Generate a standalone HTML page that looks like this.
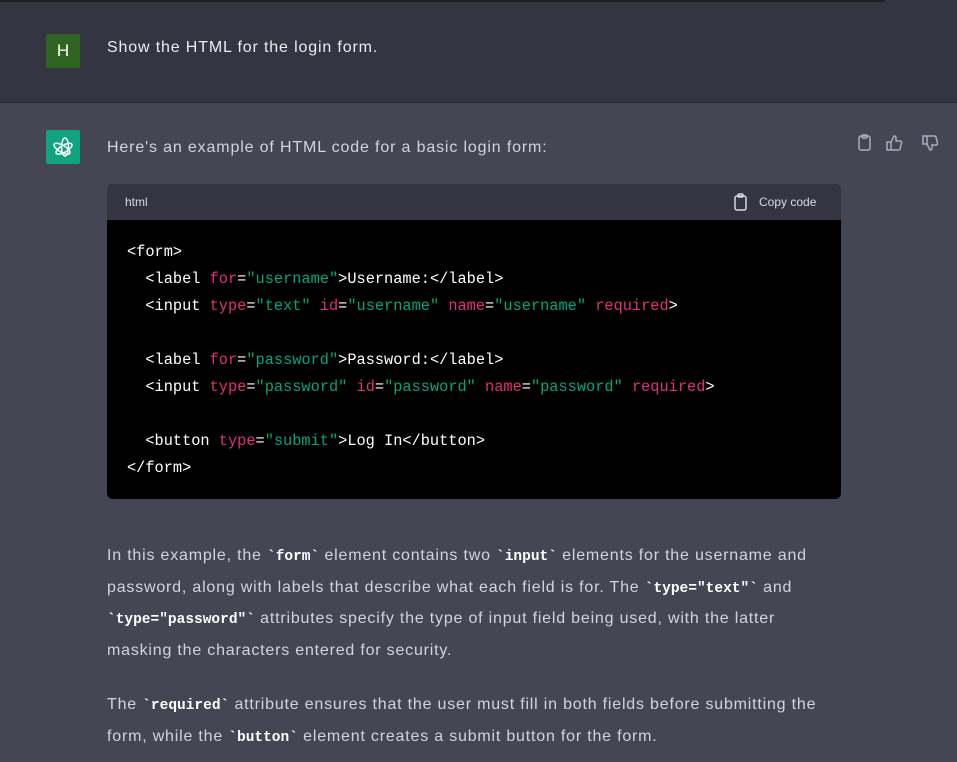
<!DOCTYPE html>
<html><head><style>
body{margin:0;width:957px;height:762px;overflow:hidden;background:#444654;font-family:"Liberation Sans",sans-serif;color:#ececf1}
.top{position:absolute;left:0;top:0;width:957px;height:102px;background:#343541;border-bottom:1px solid #2a2b32}
.topline{position:absolute;left:0;top:0;width:885px;height:2px;background:#202123}
.av{position:absolute;width:34px;height:34px;border-radius:2px}
.t{position:absolute;font-size:16px;letter-spacing:0.85px}
.code{position:absolute;left:107px;top:184px;width:734px;height:315px;border-radius:6px;background:#000;overflow:hidden}
.ch{height:36px;background:#343541;font-size:12px;color:#d9d9e3;position:relative}
pre{margin:0;padding:19px 20px;font-family:"Liberation Mono",monospace;font-size:15.3px;line-height:27px;color:#fff}
.a{color:#df3079}.s{color:#00a67d}
.para{position:absolute;left:107px;width:760px;font-size:16px;line-height:31.5px;color:#d1d5db;letter-spacing:0.8px}
code{font-family:"Liberation Mono",monospace;font-weight:bold;color:#fff;font-size:14.5px;letter-spacing:0;line-height:1}
</style></head><body>
<div class="top"><div class="topline"></div>
<div class="av" style="left:46px;top:34px;background:#2f6423;color:#fff;font-size:17px;text-align:center;line-height:34px">H</div>
<div class="t" style="left:107px;top:39px;color:#ececf1">Show the HTML for the login form.</div>
</div>
<div class="av" style="left:46px;top:130px;background:#10a37f">
<svg width="34" height="34" viewBox="0 0 34 34" fill="none" stroke="#fff" stroke-width="1.5"><g transform="translate(17 17)"><ellipse rx="3.5" ry="9" transform="rotate(0) translate(2 0)"/><ellipse rx="3.5" ry="9" transform="rotate(60) translate(2 0)"/><ellipse rx="3.5" ry="9" transform="rotate(120) translate(2 0)"/></g></svg></div>
<div class="t" style="left:107px;top:139px;color:#d1d5db">Here's an example of HTML code for a basic login form:</div>
<svg style="position:absolute;left:856px;top:134px" width="82" height="18" fill="none" stroke="#acacbe" stroke-width="1.5"><rect x="3" y="2" width="11" height="14" rx="2"/><rect x="6" y="1" width="5" height="3" rx="1"/><path d="M35 8v8h-4V8zM35 8l3-6c2 0 2 1 2 3v2h4c1 0 2 1 1.5 2l-1.5 6c0 1-1 1-2 1h-7"/><path d="M67 10V2h4v8zM71 10l3 6c2 0 2-1 2-3v-2h4c1 0 2-1 1.5-2l-1.5-6c0-1-1-1-2-1h-7"/></svg>
<div class="code"><div class="ch"><span style="position:absolute;left:18px;top:11px">html</span>
<svg style="position:absolute;left:626px;top:9px" width="16" height="18" fill="none" stroke="#d9d9e3" stroke-width="1.5"><rect x="2" y="3" width="11" height="14" rx="2"/><rect x="5" y="1" width="5" height="3" rx="1"/></svg>
<span style="position:absolute;left:652px;top:11px">Copy code</span></div>
<pre>&lt;form&gt;
  &lt;label <span class="a">for</span>=<span class="s">"username"</span>&gt;Username:&lt;/label&gt;
  &lt;input <span class="a">type</span>=<span class="s">"text"</span> <span class="a">id</span>=<span class="s">"username"</span> <span class="a">name</span>=<span class="s">"username"</span> <span class="a">required</span>&gt;

  &lt;label <span class="a">for</span>=<span class="s">"password"</span>&gt;Password:&lt;/label&gt;
  &lt;input <span class="a">type</span>=<span class="s">"password"</span> <span class="a">id</span>=<span class="s">"password"</span> <span class="a">name</span>=<span class="s">"password"</span> <span class="a">required</span>&gt;

  &lt;button <span class="a">type</span>=<span class="s">"submit"</span>&gt;Log In&lt;/button&gt;
&lt;/form&gt;</pre></div>
<div class="para" style="top:540px">In this example, the <code>`form`</code> element contains two <code>`input`</code> elements for the username and<br>password, along with labels that describe what each field is for. The <code>`type="text"`</code> and<br><code>`type="password"`</code> attributes specify the type of input field being used, with the latter<br>masking the characters entered for security.</div>
<div class="para" style="top:689px">The <code>`required`</code> attribute ensures that the user must fill in both fields before submitting the<br>form, while the <code>`button`</code> element creates a submit button for the form.</div>
</body></html>
